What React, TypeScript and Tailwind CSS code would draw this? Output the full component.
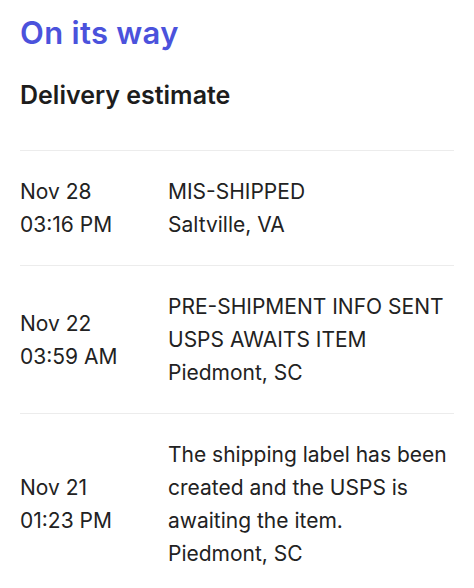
const events = [
  { date: "Nov 28", time: "03:16 PM", lines: ["MIS-SHIPPED", "Saltville, VA"] },
  { date: "Nov 22", time: "03:59 AM", lines: ["PRE-SHIPMENT INFO SENT", "USPS AWAITS ITEM", "Piedmont, SC"] },
  {
    date: "Nov 21",
    time: "01:23 PM",
    lines: ["The shipping label has been", "created and the USPS is", "awaiting the item.", "Piedmont, SC"],
  },
];

export default function App() {
  return (
    <div className="min-h-screen bg-white px-5 pt-[12px] font-['Inter',sans-serif] text-[#222]">
      <h1 className="text-[31px] font-semibold leading-[42px] tracking-[0.3px] text-[#4b52dc]">On its way</h1>
      <h2 className="mt-[24px] text-[25px] font-semibold leading-[34px] text-[#1d1d1d]">Delivery estimate</h2>

      <div className="mt-[38px] border-t border-[#ececec]">
        {events.map((e) => (
          <div key={e.date} className="flex items-center border-b border-[#ececec] py-6 text-[21px] leading-[33px]">
            <div className="w-[148px] shrink-0">
              <div>{e.date}</div>
              <div>{e.time}</div>
            </div>
            <div>
              {e.lines.map((l) => (
                <div key={l}>{l}</div>
              ))}
            </div>
          </div>
        ))}
      </div>
    </div>
  );
}
